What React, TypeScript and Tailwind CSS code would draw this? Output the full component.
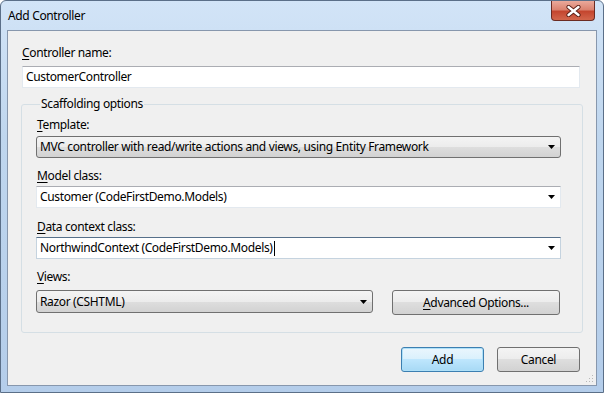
import React from 'react'

function Arrow() {
  return (
    <svg width="7" height="4" viewBox="0 0 7 4" className="shrink-0">
      <path d="M0 0h7L3.5 4z" fill="#000" />
    </svg>
  )
}

function CloseButton() {
  return (
    <div className="mr-[8px] flex h-[20px] w-[44px] items-center justify-center rounded-b-[4px] border border-t-0 border-[#6b2b22] bg-[linear-gradient(180deg,#eaa99b_0%,#db8370_45%,#c4462f_55%,#d2664c_100%)]">
      <svg width="15" height="12" viewBox="0 0 15 12">
        <path d="M2.5 2l10 8M12.5 2l-10 8" stroke="#5a1f16" strokeWidth="4.2" strokeLinecap="round" />
        <path d="M2.5 2l10 8M12.5 2l-10 8" stroke="#fff" strokeWidth="2.4" strokeLinecap="round" />
      </svg>
    </div>
  )
}

function Label({ k, rest, className = '' }: { k: string; rest: string; className?: string }) {
  return (
    <div className={`h-[16px] leading-[16px] ${className}`}>
      <span className="underline underline-offset-2">{k}</span>
      {rest}
    </div>
  )
}

export default function App() {
  return (
    <div className="flex h-[393px] w-[604px] flex-col overflow-hidden rounded-t-[6px] border border-[#5b6f88] bg-[linear-gradient(180deg,#d2e4f7_0%,#bfd6ee_35%,#b4cdea_100%)] font-['Segoe_UI','Noto_Sans',sans-serif] text-[12px] tracking-[-0.35px] text-black">
      <div className="flex h-[29px] shrink-0 items-start justify-between">
        <span className="pl-[7px] pt-[7px] leading-[16px]">Add Controller</span>
        <CloseButton />
      </div>

      <div className="relative mx-[6px] mb-[6px] flex flex-1 flex-col border border-[#8797ad] bg-[#f0f0f0]">
        <Label k="C" rest="ontroller name:" className="ml-[14px] mt-[14px]" />
        <div className="ml-[14px] mt-[5px] flex h-[22px] w-[558px] items-center border border-[#e3e9ef] border-t-[#abadb3] bg-white pl-[3px]">
          CustomerController
        </div>

        <fieldset className="ml-[13px] mt-[8px] w-[562px] rounded-[3px] border border-[#d5dfe5] pb-[17px] pl-[14px]">
          <legend className="ml-[4px] px-[1px] leading-[16px]">Scaffolding options</legend>
          <Label k="T" rest="emplate:" className="ml-[1px] mt-[5px]" />
          <div className="mt-[3px] flex h-[22px] w-[525px] items-center justify-between rounded-[3px] border border-[#707070] bg-[linear-gradient(180deg,#f4f4f4_0%,#ececec_50%,#dedede_50%,#d2d2d2_100%)] pl-[3px] pr-[5px]">
            <span>MVC controller with read/write actions and views, using Entity Framework</span>
            <Arrow />
          </div>

          <Label k="M" rest="odel class:" className="ml-[1px] mt-[10px]" />
          <div className="mt-[2px] flex h-[22px] w-[525px] items-center justify-between border border-[#e3e9ef] border-t-[#abadb3] bg-white pl-[3px] pr-[5px]">
            <span>Customer (CodeFirstDemo.Models)</span>
            <Arrow />
          </div>

          <Label k="D" rest="ata context class:" className="ml-[1px] mt-[11px]" />
          <div className="mt-[2px] flex h-[22px] w-[525px] items-center justify-between border border-[#c5d3df] border-t-[#56708a] bg-white pl-[3px] pr-[5px]">
            <span className="flex items-center">
              NorthwindContext (CodeFirstDemo.Models)
              <span className="ml-[1px] h-[15px] w-[1px] bg-black" />
            </span>
            <Arrow />
          </div>

          <Label k="V" rest="iews:" className="ml-[1px] mt-[10px]" />
          <div className="mt-[5px] flex items-start gap-[19px]">
            <div className="flex h-[23px] w-[337px] items-center justify-between rounded-[3px] border border-[#707070] bg-[linear-gradient(180deg,#f4f4f4_0%,#ececec_50%,#dedede_50%,#d2d2d2_100%)] pl-[3px] pr-[5px]">
              <span>Razor (CSHTML)</span>
              <Arrow />
            </div>
            <button className="flex h-[25px] w-[168px] items-center justify-center rounded-[3px] border border-[#707070] bg-[linear-gradient(180deg,#f4f4f4_0%,#ececec_50%,#dedede_50%,#d2d2d2_100%)]">
              <span className="underline underline-offset-2">A</span>dvanced Options...
            </button>
          </div>
        </fieldset>

        <div className="mr-[16px] mt-[14px] flex justify-end gap-[13px]">
          <button className="flex h-[25px] w-[83px] items-center justify-center rounded-[3px] border border-[#3c7fb1] bg-[linear-gradient(180deg,#eaf6fd_0%,#d9f0fc_50%,#bee6fd_50%,#a7d9f5_100%)] shadow-[inset_0_0_0_1px_#aee0f8]">
            Add
          </button>
          <button className="flex h-[25px] w-[83px] items-center justify-center rounded-[3px] border border-[#707070] bg-[linear-gradient(180deg,#f4f4f4_0%,#ececec_50%,#dedede_50%,#d2d2d2_100%)]">
            Cancel
          </button>
        </div>

        <svg width="8" height="8" viewBox="0 0 8 8" className="absolute bottom-[2px] right-[2px]">
          <rect x="6" y="0" width="1" height="1" fill="#b8b8b8" />
          <rect x="3" y="3" width="1" height="1" fill="#b8b8b8" />
          <rect x="6" y="3" width="1" height="1" fill="#b8b8b8" />
          <rect x="0" y="6" width="1" height="1" fill="#b8b8b8" />
          <rect x="3" y="6" width="1" height="1" fill="#b8b8b8" />
          <rect x="6" y="6" width="1" height="1" fill="#b8b8b8" />
        </svg>
      </div>
    </div>
  )
}
